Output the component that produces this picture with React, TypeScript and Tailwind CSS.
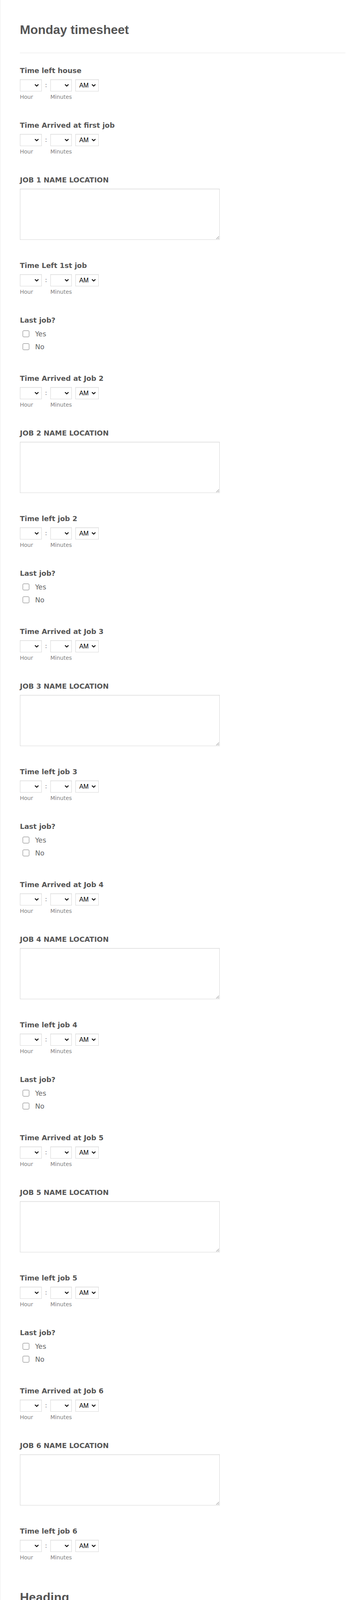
import React from 'react';

const labelFont = { fontFamily: '"DejaVu Sans", Verdana, sans-serif' };
const headFont = { fontFamily: '"Liberation Sans", Arial, sans-serif' };

type Field =
  | { kind: 'time'; label: string }
  | { kind: 'text'; label: string }
  | { kind: 'check'; label: string };

const hours = ['', '1', '2', '3', '4', '5', '6', '7', '8', '9', '10', '11', '12'];
const minutes = ['', ...Array.from({ length: 60 }, (_, i) => String(i).padStart(2, '0'))];

function buildFields(): Field[] {
  const list: Field[] = [
    { kind: 'time', label: 'Time left house' },
    { kind: 'time', label: 'Time Arrived at first job' },
    { kind: 'text', label: 'JOB 1 NAME LOCATION' },
    { kind: 'time', label: 'Time Left 1st job' },
    { kind: 'check', label: 'Last job?' },
  ];
  for (let n = 2; n <= 6; n++) {
    list.push({ kind: 'time', label: `Time Arrived at Job ${n}` });
    list.push({ kind: 'text', label: `JOB ${n} NAME LOCATION` });
    list.push({ kind: 'time', label: `Time left job ${n}` });
    if (n < 6) list.push({ kind: 'check', label: 'Last job?' });
  }
  return list;
}

function Chevron() {
  return (
    <svg
      className="pointer-events-none absolute right-[8px] top-1/2 -translate-y-1/2"
      width="10"
      height="7"
      viewBox="0 0 10 7"
      fill="none"
    >
      <path d="M1.2 1.2 L5 5 L8.8 1.2" stroke="#111" strokeWidth="2.4" strokeLinecap="round" strokeLinejoin="round" />
    </svg>
  );
}

function Select({ width, options }: { width: string; options: string[] }) {
  return (
    <div className={`relative h-[31px] ${width}`}>
      <select
        className="block h-full w-full appearance-none rounded-none border border-[#d9d9d9] bg-white pl-[9px] text-[16px] text-black shadow-[inset_0_1px_2px_rgba(0,0,0,0.08)] outline-none"
        style={headFont}
        defaultValue={options[0]}
      >
        {options.map((o) => (
          <option key={o} value={o}>
            {o}
          </option>
        ))}
      </select>
      <Chevron />
    </div>
  );
}

function Label({ text, mb }: { text: string; mb: string }) {
  return (
    <div className={`text-[18px] font-bold leading-[22px] text-[#555] ${mb}`} style={labelFont}>
      {text}
    </div>
  );
}

function TimeField({ label, last }: { label: string; last?: boolean }) {
  return (
    <div className={last ? '' : 'pb-[53px]'}>
      <Label text={label} mb="mb-[11px]" />
      <div className="flex items-start">
        <div className="w-[56px]">
          <Select width="w-[56px]" options={hours} />
          <div className="mt-[6px] text-[14px] leading-[17px] text-[#808080]" style={labelFont}>
            Hour
          </div>
        </div>
        <div
          className="flex h-[31px] w-[22px] items-center justify-center pb-[2px] text-[16px] text-[#777]"
          style={labelFont}
        >
          :
        </div>
        <div className="w-[55px]">
          <Select width="w-[55px]" options={minutes} />
          <div className="mt-[6px] whitespace-nowrap text-[14px] leading-[17px] text-[#808080]" style={labelFont}>
            Minutes
          </div>
        </div>
        <div className="ml-[9px]">
          <Select width="w-[60px]" options={['AM', 'PM']} />
        </div>
      </div>
    </div>
  );
}

function TextField({ label }: { label: string }) {
  return (
    <div className="pb-[55px]">
      <Label text={label} mb="mb-[11px]" />
      <textarea className="block h-[131px] w-[512px] border border-[#d9d9d9] bg-white shadow-[inset_0_1px_2px_rgba(0,0,0,0.08)] outline-none" />
    </div>
  );
}

function CheckField({ label }: { label: string }) {
  return (
    <div className="pb-[54px]">
      <Label text={label} mb="mb-[7px]" />
      {['Yes', 'No'].map((opt) => (
        <label key={opt} className="flex h-[33px] items-center pl-[7px]">
          <input
            type="checkbox"
            className="h-[17px] w-[17px] appearance-none rounded-[3px] border border-[#7a7a7a] bg-white"
          />
          <span className="ml-[15px] text-[17.5px] leading-[22px] text-[#666]" style={labelFont}>
            {opt}
          </span>
        </label>
      ))}
    </div>
  );
}

function Button({ children, className }: { children: React.ReactNode; className?: string }) {
  return (
    <button
      type="button"
      className={`block h-[47px] rounded-[4px] border border-[#cdcdcd] bg-[#f3f3f3] px-[21px] text-[18px] leading-[20px] text-[#555] shadow-[0_1px_2px_rgba(0,0,0,0.22)] ${className ?? ''}`}
      style={headFont}
    >
      {children}
    </button>
  );
}

export default function App() {
  const fields = buildFields();

  return (
    <div className="border-l border-[#ebebeb] bg-white pl-[50px] pr-[45px] pb-[35px]">
      {/* Form title */}
      <h1 className="pt-[58px] text-[32px] font-bold leading-[36px] text-[#555]" style={headFont}>
        Monday timesheet
      </h1>
      <div className="mt-[41px] h-px bg-[#e6e6e6]" />

      {/* Fields */}
      <div className="pt-[34px]">
        {fields.map((f, i) => {
          if (f.kind === 'time') return <TimeField key={i} label={f.label} />;
          if (f.kind === 'text') return <TextField key={i} label={f.label} />;
          return <CheckField key={i} label={f.label} />;
        })}
      </div>

      {/* Home section */}
      <div className="pt-[22px]">
        <h2 className="text-[32px] font-bold leading-[36px] text-[#555]" style={headFont}>
          Heading
        </h2>
        <div className="mt-[17px] text-[20px] leading-[24px] text-[#6f6f6f]" style={headFont}>
          Hometime
        </div>
      </div>
      <div className="mt-[37px] h-px bg-[#e6e6e6]" />

      <div className="pt-[34px]">
        <TimeField label="Time arrive home" last />
      </div>

      <div className="mt-[68px] flex">
        <Button className="ml-[210px]">Submit</Button>
      </div>
      <div className="mt-[50px] h-px bg-[#e6e6e6]" />
      <div className="mt-[33px] flex">
        <Button>Back</Button>
      </div>
    </div>
  );
}
